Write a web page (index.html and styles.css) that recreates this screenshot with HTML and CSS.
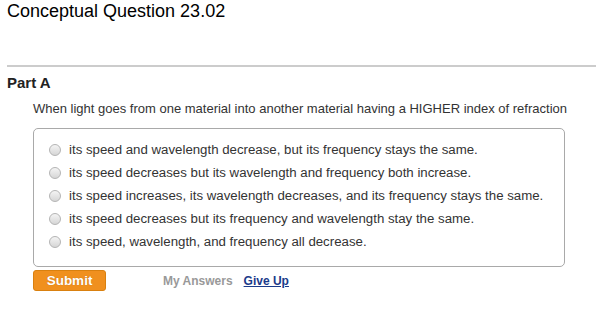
FILE: index.html
```html
<!DOCTYPE html>
<html lang="en">
<head>
<meta charset="utf-8">
<title>Conceptual Question 23.02</title>
<link rel="stylesheet" href="styles.css">
</head>
<body>
<h1 class="title">Conceptual Question 23.02</h1>
<div class="rule"></div>
<h2 class="part">Part A</h2>
<p class="question">When light goes from one material into another material having a HIGHER index of refraction</p>
<div class="choices">
  <label class="choice"><span class="radio"></span><span class="choice-text">its speed and wavelength decrease, but its frequency stays the same.</span></label>
  <label class="choice"><span class="radio"></span><span class="choice-text">its speed decreases but its wavelength and frequency both increase.</span></label>
  <label class="choice"><span class="radio"></span><span class="choice-text">its speed increases, its wavelength decreases, and its frequency stays the same.</span></label>
  <label class="choice"><span class="radio"></span><span class="choice-text">its speed decreases but its frequency and wavelength stay the same.</span></label>
  <label class="choice"><span class="radio"></span><span class="choice-text">its speed, wavelength, and frequency all decrease.</span></label>
</div>
<div class="actions">
  <button class="submit" type="button">Submit</button>
  <span class="my-answers">My Answers</span>
  <a class="give-up" href="#">Give Up</a>
</div>
</body>
</html>
```

FILE: styles.css
```css
html, body {
  margin: 0;
  padding: 0;
  background: #fff;
}

body {
  font-family: "Liberation Sans", Arial, sans-serif;
  color: #333;
}

.title {
  margin: 0;
  padding: 1px 0 0 7px;
  font-size: 18px;
  line-height: 20px;
  font-weight: normal;
  color: #000;
}

.rule {
  margin: 44px 0 0 7px;
  border-top: 2px solid #cccccc;
  height: 0;
}

.part {
  margin: 7px 0 0 7px;
  font-size: 15px;
  line-height: 18px;
  font-weight: bold;
  color: #222;
}

.question {
  margin: 9px 0 0 33px;
  font-size: 13px;
  line-height: 16px;
  color: #333;
}

.choices {
  margin: 11px 0 0 33px;
  width: 532px;
  box-sizing: border-box;
  border: 1px solid #a9a9a9;
  border-radius: 5px;
  padding: 9px 0 13px 15px;
  display: flex;
  flex-direction: column;
}

.choice {
  display: flex;
  align-items: center;
  gap: 8px;
  height: 23px;
  font-size: 13.25px;
  line-height: 23px;
  color: #333;
}

.radio {
  width: 12px;
  height: 12px;
  box-sizing: border-box;
  border-radius: 50%;
  border: 1px solid #b4b4b4;
  background: linear-gradient(#f4f4f4, #d6d6d6);
  flex: none;
}

.actions {
  margin: 3px 0 0 33px;
  display: flex;
  align-items: center;
}

.submit {
  width: 73px;
  height: 21px;
  box-sizing: border-box;
  padding: 0;
  border: 1px solid #d9800f;
  border-radius: 3px;
  background: #f0901e;
  color: #fff;
  font-family: "Liberation Sans", Arial, sans-serif;
  font-size: 13.5px;
  font-weight: bold;
  line-height: 19px;
  text-shadow: 0 0 1px rgba(120, 60, 0, 0.4);
}

.my-answers {
  margin-left: 57px;
  font-size: 12px;
  font-weight: bold;
  color: #999;
}

.give-up {
  margin-left: 11px;
  font-size: 12px;
  font-weight: bold;
  color: #1b3a8a;
  text-decoration: underline;
}
```
